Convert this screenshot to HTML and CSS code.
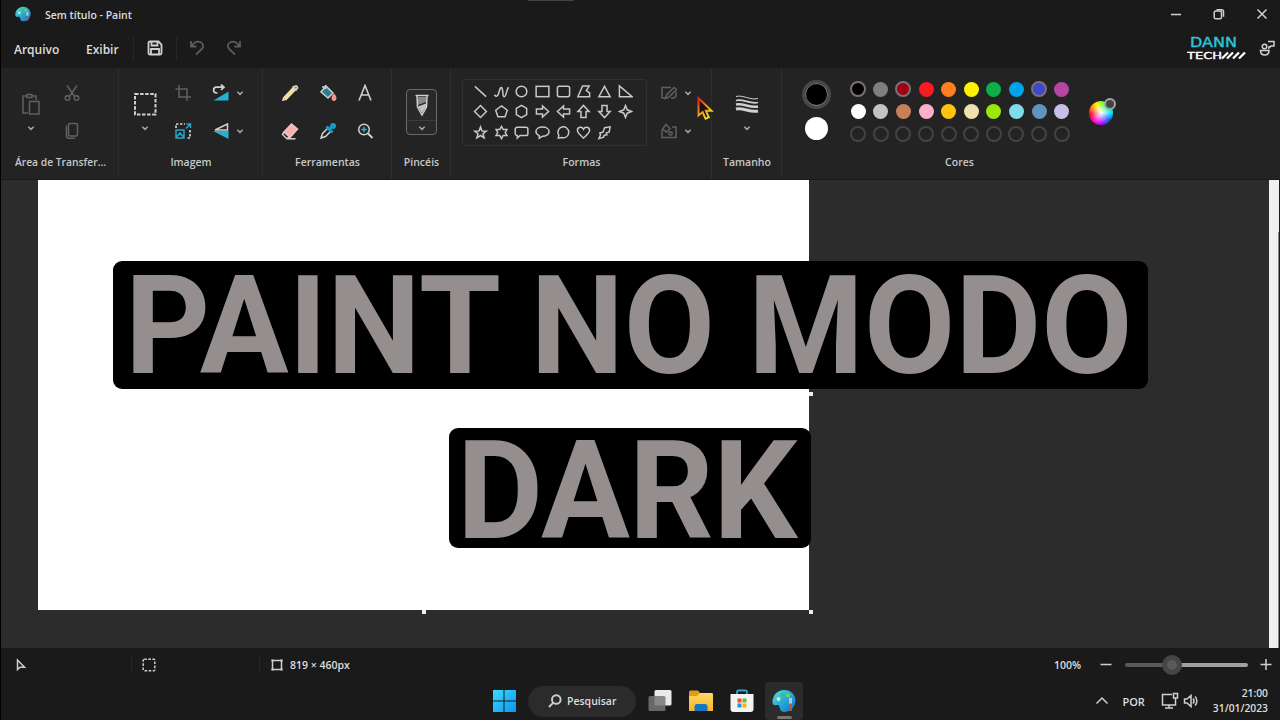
FILE: index.html
```html
<!DOCTYPE html>
<html lang="pt-BR">
<head>
    <meta charset="UTF-8">
    <meta name="viewport" content="width=device-width, initial-scale=1.0">
    <title>Sem título - Paint</title>
    <link rel="stylesheet" href="styles.css">
</head>
<body>
    <svg class="defs">
        <defs>
            <linearGradient id="blue" x1="0" y1="0" x2="1" y2="1">
                <stop offset="0" stop-color="#4fe0e0"/>
                <stop offset="1" stop-color="#0a6fd0"/>
            </linearGradient>
            <linearGradient id="win" x1="0" y1="0" x2="1" y2="1">
                <stop offset="0" stop-color="#3ddcff"/>
                <stop offset="1" stop-color="#0795f0"/>
            </linearGradient>
            <linearGradient id="folder" x1="0" y1="0" x2="0" y2="1">
                <stop offset="0" stop-color="#ffd968"/>
                <stop offset="1" stop-color="#f6b420"/>
            </linearGradient>
            <linearGradient id="pointer" x1="0" y1="0" x2="0.6" y2="1">
                <stop offset="0" stop-color="#e0201a"/>
                <stop offset="0.5" stop-color="#f08a20"/>
                <stop offset="1" stop-color="#e6e020"/>
            </linearGradient>
        </defs>
        <symbol id="chevron" viewBox="0 0 8 8"><path d="M1.3 2.8 4 5.4 6.7 2.8"/></symbol>
        <symbol id="palette" viewBox="0 0 24 24">
            <path d="M12 1C5.500 1 .5 6.500.5 13c0 2.500 1.500 3.600 3.200 3.200 2-.5 3.600-.4 3.800 1.600.2 2.400 1.500 5.200 4.500 5.200C19 23 23.500 17 23.500 11.500 23.500 5.500 18.500 1 12 1z" fill="url(#blue)"/>
            <circle cx="6.500" cy="10" r="1.900" fill="#d8f5b0"/>
            <circle cx="10.500" cy="5.800" r="1.900" fill="#37c466"/>
            <circle cx="16" cy="6.500" r="1.900" fill="#7ad943"/>
            <path d="M18.500 9v6" stroke="#b9c6d4" stroke-width="3"/>
            <path d="M18.500 14.500v7.500" stroke="#b25f34" stroke-width="2.600"/>
        </symbol>
    </svg>

    <div class="window">
        <div class="titlebar">
            <svg class="app-icon" viewBox="0 0 24 24"><use href="#palette"/></svg>
            <span class="title">Sem título - Paint</span>
            <div class="win-buttons">
                <svg viewBox="0 0 12 12"><path d="M1 6.500h10"/></svg>
                <svg viewBox="0 0 12 12"><rect x="1.200" y="3" width="7.300" height="7.800" rx="1.600"/><path d="M3.500 1.700h5c1.300 0 2 .7 2 2v5"/></svg>
                <svg viewBox="0 0 12 12"><path d="M1.500 1.500l9 9M10.500 1.500l-9 9"/></svg>
            </div>
        </div>
        <div class="top-tab"></div>

        <div class="menubar">
            <span class="menu-file">Arquivo</span>
            <span class="menu-view">Exibir</span>
            <i class="sep"></i>
            <svg class="ico save" viewBox="0 0 16 16"><path d="M3 1.500h8.500l3 3V13a1.500 1.500 0 0 1-1.500 1.500H3A1.500 1.500 0 0 1 1.500 13V3A1.500 1.500 0 0 1 3 1.500zM4.500 1.500v4h6v-4M4 14.500V9h8v5.500"/></svg>
            <i class="sep"></i>
            <svg class="ico undo" viewBox="0 0 16 16"><path d="M2 1v5.500h5.500M2.500 6C5 2.500 8.500.800 11.700 2.300c3 1.600 3 4.700 1 6.700L7 14.700"/></svg>
            <svg class="ico redo" viewBox="0 0 16 16"><path d="M14 1v5.500H8.500M13.500 6C11 2.500 7.500.800 4.300 2.300c-3 1.600-3 4.700-1 6.700L9 14.700"/></svg>
            <svg class="brand" viewBox="0 0 60 26">
                <text class="brand-top" x="3" y="11.500" textLength="47" lengthAdjust="spacingAndGlyphs">DANN</text>
                <text class="brand-bottom" x="0" y="24" textLength="35" lengthAdjust="spacingAndGlyphs">TECH</text>
                <path d="M35 23.500l6-6M40 23.500l6-6M46 23.500l6-6M52 23.500l6-6"/>
            </svg>
            <svg class="ico people" viewBox="0 0 16 16"><circle cx="5.500" cy="6.500" r="2.300"/><path d="M1.500 10.500h8.500c0 3-1.500 4.500-4.200 4.500s-4.300-1.500-4.300-4.500zM9 1.500h6v4.500h-3L10 8V6"/></svg>
        </div>

        <div class="ribbon">
            <div class="group clipboard">
                <div class="tools">
                    <div class="big dim">
                        <svg class="i24" viewBox="0 0 24 24"><path d="M8 4H4v17h5M17 8V4h-4M8 2.500h5v3H8zM10.500 9.500h9.500V22h-9.500z"/></svg>
                        <svg class="chev"><use href="#chevron"/></svg>
                    </div>
                    <svg class="i18 dim" viewBox="0 0 18 18"><path d="M4 1.500l7.500 11M14 1.500l-7.500 11"/><circle cx="4.500" cy="14" r="2.300"/><circle cx="13.500" cy="14" r="2.300"/></svg>
                    <svg class="i18 dim" viewBox="0 0 18 18"><rect x="5.500" y="1.500" width="9" height="12.500" rx="1.500"/><path d="M3.500 3.500v10.300c0 1.500 1 2.500 2.500 2.500h6"/></svg>
                </div>
                <div class="label first">Área de Transfer...</div>
            </div>

            <div class="group image">
                <div class="tools">
                    <div class="big">
                        <svg class="i24" viewBox="0 0 24 24"><rect class="dash" x="2" y="2" width="20.500" height="20.500"/></svg>
                        <svg class="chev"><use href="#chevron"/></svg>
                    </div>
                    <svg class="i18 dim" viewBox="0 0 18 18"><path d="M5 1v12h12M1.500 5H13v12"/></svg>
                    <div class="with-chev">
                        <svg class="i18" viewBox="0 0 18 18"><path stroke-width="1.700" d="M5.500 9H4.500a2.900 2.900 0 0 1 0-5.800h7M9 .500 12 3.200 9 6"/><path class="cyan" d="M1.500 16.500h15V7.500z"/></svg>
                        <svg class="chev"><use href="#chevron"/></svg>
                    </div>
                    <svg class="i18" viewBox="0 0 18 18"><path stroke-width="1.700" stroke-dasharray="2.500 1.500" d="M2 6V2h9M16 8v8h-4"/><path class="cyan-line" d="M2 8h8v8H2zM2.500 15l3.500-4 4 4.500M12 6.500l4-4M12.500 2h4v4"/></svg>
                    <div class="with-chev">
                        <svg class="i18" viewBox="0 0 18 18"><path d="M15.500 8V2L3 8z"/><path class="cyan" d="M1 9h15.500v8z"/></svg>
                        <svg class="chev"><use href="#chevron"/></svg>
                    </div>
                </div>
                <div class="label">Imagem</div>
            </div>

            <div class="group utils">
                <div class="tools">
                    <svg class="i18" viewBox="0 0 18 18"><path d="M3.500 15 13.500 4.500" stroke="#f3dea0" stroke-width="4.500"/><path d="M12 3l3 3 1.500-2c.5-1-1-2.500-2-2z" fill="#888"/><path d="M1 17.200l1-4 3 2.800z" fill="#ddd" stroke="none"/></svg>
                    <svg class="i18" viewBox="0 0 18 18"><path d="M7 2l7 7-5 5L2 8z" fill="#2a7d92"/><path d="M6.500 5V1M3 3h4"/><path d="M15 9.500c4 4 2.500 7.500 0 7.500s-4-3.500 0-7.500z" fill="#f4958c" stroke="none"/></svg>
                    <svg class="i18" viewBox="0 0 18 18"><path stroke-width="1.600" d="M2 16.500 8 1.500l6 15M4 11h8"/></svg>
                    <svg class="i18" viewBox="0 0 18 18"><path d="M3 10l7.500-8 6 5L9 15.500z" fill="#f7b0b0" stroke="#f7c4c4"/><path d="M3 10l-1.500 2.500 4 4L9 15.200M5.500 16.800h9"/></svg>
                    <svg class="i18" viewBox="0 0 18 18"><path d="M9.500 5.500 3.500 11.500 2 16l4.500-1.500 6-6"/><path d="M7.500 4.500l6 6M10.500 7l3.500-3.500" stroke="#179bc2" stroke-width="3"/><circle cx="14" cy="4" r="3" fill="#179bc2" stroke="none"/></svg>
                    <svg class="i18" viewBox="0 0 18 18"><circle cx="7" cy="7.500" r="5.300"/><path d="M11 11.500 15.500 16" stroke-width="2"/><path stroke="#27b4d4" d="M7 4.800v5.400M4.300 7.500h5.400"/></svg>
                </div>
                <div class="label">Ferramentas</div>
            </div>

            <div class="group brushes">
                <div class="tools">
                    <div class="brush-button">
                        <svg class="brush" viewBox="0 0 16 24"><path d="M1.500 1.500h13M3 2l.5 11L8 21l4.500-8L13 2"/><path d="M4 3h8v5l-8 3z" fill="#888" stroke="none"/><path d="M4 12.500l8-3v3.500L8 19z" fill="#c4c4c4" stroke="none"/></svg>
                        <svg class="chev"><use href="#chevron"/></svg>
                    </div>
                </div>
                <div class="label">Pincéis</div>
            </div>

            <div class="group shapes">
                <div class="tools">
                    <div class="shape-box">
                        <svg viewBox="0 0 16 16"><path d="M2 2.500l12 11"/></svg>
                        <svg viewBox="0 0 16 16"><path d="M.5 11.500C3 15 4.500 12 5.500 8S8 1.500 9 6s0 7.500 2 7.500S13 7 15.500 3.500"/></svg>
                        <svg viewBox="0 0 16 16"><circle cx="8" cy="8" r="5.700"/></svg>
                        <svg viewBox="0 0 16 16"><rect x="1.200" y="2.500" width="13.600" height="11"/></svg>
                        <svg viewBox="0 0 16 16"><rect x="1.500" y="2.500" width="13" height="11" rx="2"/></svg>
                        <svg viewBox="0 0 16 16"><path d="M7 2.200h7L11 7l3.500 2.500v4H2z"/></svg>
                        <svg viewBox="0 0 16 16"><path d="M8 2.500 14 13.500H2z"/></svg>
                        <svg viewBox="0 0 16 16"><path d="M1.500 2v11.500H15z"/></svg>

                        <svg viewBox="0 0 16 16"><path d="M8 1.700 14.300 8 8 14.300 1.700 8z"/></svg>
                        <svg viewBox="0 0 16 16"><path d="M8 2l6.200 4.600-2.400 7.100H4.200L1.800 6.600z"/></svg>
                        <svg viewBox="0 0 16 16"><path d="M8 1.500 13.500 4.700v6.600L8 14.500l-5.500-3.200V4.700z"/></svg>
                        <svg viewBox="0 0 16 16"><path d="M1.500 5.300H8V2l6.500 6L8 14v-3.300H1.500z"/></svg>
                        <svg viewBox="0 0 16 16"><path d="M14.500 5.300H8V2L1.500 8 8 14v-3.300h6.500z"/></svg>
                        <svg viewBox="0 0 16 16"><path d="M5.300 14.500V8H2l6-6.500L14 8h-3.300v6.500z"/></svg>
                        <svg viewBox="0 0 16 16"><path d="M5.300 1.500V8H2l6 6.500L14 8h-3.300V1.500z"/></svg>
                        <svg viewBox="0 0 16 16"><path d="M8 1.700 9.800 6.200 14.300 8 9.800 9.800 8 14.300 6.200 9.800 1.700 8l4.500-1.800z"/></svg>

                        <svg viewBox="0 0 16 16"><path d="M8 2l1.600 4.300 4.600.2-3.600 2.800 1.300 4.400L8 11.200l-3.900 2.500 1.300-4.400-3.600-2.800 4.600-.2z"/></svg>
                        <svg viewBox="0 0 16 16"><path d="M8 1.500l1.800 3.300h4L12 8l1.800 3.200h-4L8 14.500l-1.800-3.300h-4L4 8 2.200 4.800h4z"/></svg>
                        <svg viewBox="0 0 16 16"><path d="M3.500 2.500h9.300a2 2 0 0 1 2 2v4.700a2 2 0 0 1-2 2H6.500L3.500 14v-2.800a2 2 0 0 1-2.200-2V4.500a2 2 0 0 1 2.200-2z"/></svg>
                        <svg viewBox="0 0 16 16"><path d="M8 2.200c4 0 7 2 7 4.800s-3 5-7 5L4.500 14v-2.700C2.500 10.500 1 9 1 7c0-2.800 3-4.800 7-4.800z"/></svg>
                        <svg viewBox="0 0 16 16"><path d="M3 11A5.800 5.800 0 1 1 6 13.300L2.500 14z"/></svg>
                        <svg viewBox="0 0 16 16"><path d="M8 14C4 10.500 1.500 8.500 1.500 5.700 1.500 2 6.500 1.200 8 4.500 9.500 1.200 14.500 2 14.500 5.700 14.500 8.500 12 10.500 8 14z"/></svg>
                        <svg viewBox="0 0 16 16"><path d="M8 3l6-1-1 5.500-3 1 .5 2-3 .5-.5 2-5 1.500 1.800-4L3 8.500l3.500-1L7 6z"/></svg>
                    </div>
                    <div class="shape-options">
                        <div class="with-chev">
                            <svg class="i18 dim" viewBox="0 0 18 18"><path d="M11 3.500H2v10.500h3M16 8v3c0 2-1 3-3 3h-2M5.500 14.500l1-3.500L14 3.500l2.500 2L9 13z"/></svg>
                            <svg class="chev"><use href="#chevron"/></svg>
                        </div>
                        <div class="with-chev">
                            <svg class="i18 dim" viewBox="0 0 18 18"><path d="M2 8v7.500h14V5h-4M6 2.500l4 4-3.500 3.500L2.500 7z"/><circle cx="10.500" cy="11.500" r="1.700"/></svg>
                            <svg class="chev"><use href="#chevron"/></svg>
                        </div>
                    </div>
                </div>
                <div class="label">Formas</div>
            </div>

            <div class="group size">
                <div class="tools">
                    <div class="big">
                        <svg class="i24" viewBox="0 0 24 24"><path stroke-width="1" d="M1 4.500c7-2 14 4 22 2"/><path stroke-width="1.800" d="M1 8.500c7-2 14 4 22 2"/><path stroke-width="2.500" d="M1 12.500c7-2 14 4 22 2"/><path stroke-width="3" d="M1 17c7-2 14 4 22 2"/></svg>
                        <svg class="chev"><use href="#chevron"/></svg>
                    </div>
                </div>
                <div class="label">Tamanho</div>
            </div>

            <div class="group colors">
                <div class="tools">
                    <div class="current">
                        <span class="primary"></span>
                        <span class="secondary"></span>
                    </div>
                    <div class="swatches">
                        <b class="black ring"></b><b class="gray"></b><b class="darkred ring"></b><b class="red"></b><b class="orange"></b><b class="yellow"></b><b class="green"></b><b class="sky"></b><b class="indigo ring"></b><b class="purple"></b>
                        <b class="white"></b><b class="silver"></b><b class="brown"></b><b class="pink"></b><b class="gold"></b><b class="cream"></b><b class="lime"></b><b class="aqua"></b><b class="steel"></b><b class="lavender"></b>
                        <b class="empty"></b><b class="empty"></b><b class="empty"></b><b class="empty"></b><b class="empty"></b><b class="empty"></b><b class="empty"></b><b class="empty"></b><b class="empty"></b><b class="empty"></b>
                    </div>
                    <div class="wheel"><span class="wheel-add"></span></div>
                </div>
                <div class="label">Cores</div>
            </div>
        </div>

        <div class="workspace">
            <div class="canvas">
                <i class="handle bottom"></i>
                <i class="handle corner"></i>
                <i class="handle right"></i>
            </div>
            <div class="scrollbar"><div class="thumb"></div></div>
        </div>

        <div class="statusbar">
            <div class="cell pos">
                <svg class="ico14" viewBox="0 0 14 14"><path d="M3.500 2v9.500l2.500-2.300h4.500z"/></svg>
            </div>
            <div class="cell sel">
                <svg class="ico14" viewBox="0 0 14 14"><rect x="1.200" y="1.200" width="11.600" height="11.600" rx="1" stroke-dasharray="2.600 1.500"/></svg>
            </div>
            <div class="cell dims">
                <svg class="ico14" viewBox="0 0 14 14"><path d="M2.500 2.500h9v9h-9z"/><path stroke-width="2.200" d="M1.400 2.500h2.200M10.400 2.500h2.200M1.400 11.500h2.200M10.400 11.500h2.200"/></svg>
                <span class="dims-text">819 × 460px</span>
            </div>
            <div class="zoom">
                <span class="percent">100%</span>
                <svg class="ico14 minus" viewBox="0 0 14 14"><path d="M1.500 6.500h11"/></svg>
                <div class="slider"><span class="knob"></span></div>
                <svg class="ico14 plus" viewBox="0 0 14 14"><path d="M1.500 6.500h11M7 1v11"/></svg>
            </div>
        </div>
    </div>

    <div class="taskbar">
        <div class="apps">
            <svg class="app" viewBox="0 0 24 24"><path fill="url(#win)" d="M1 1h10.500v10.500H1zM12.500 1H24v10.500H12.500zM1 12.500h10.500V23H1zM12.500 12.500H24V23H12.500z"/></svg>
            <div class="search">
                <svg class="ico14" viewBox="0 0 14 14"><circle cx="8.300" cy="5.500" r="4.300"/><path d="M5.300 8.700 1 13"/></svg>
                <span>Pesquisar</span>
            </div>
            <svg class="app" viewBox="0 0 24 24"><rect x="6.500" y="1" width="17" height="15.500" rx="1.500" fill="#e9e9e9"/><rect x=".5" y="7" width="17" height="15" rx="1.500" fill="#777" opacity=".85"/></svg>
            <svg class="app" viewBox="0 0 24 24"><path d="M0 3.500C0 2 .5 1.500 2 1.500h7l2.500 3-3 3H0z" fill="#e39a17"/><path d="M0 7h8l3-3h11.500c1 0 1.500.5 1.500 1.500V22H0z" fill="url(#folder)"/><path d="M5.500 22v-4.500c0-1.500 1-2.500 2.500-2.500h8c1.500 0 2.500 1 2.500 2.500V22z" fill="#1477c4"/></svg>
            <svg class="app" viewBox="0 0 24 24"><path d="M7 6V3c0-1 .5-1.500 1.500-1.500h7c1 0 1.500.5 1.500 1.500v3" fill="none" stroke="#2aa7d8" stroke-width="1.800"/><path d="M.5 5h23v15c0 2-1 3-3 3h-17c-2 0-3-1-3-3z" fill="#f3f3f3"/><path fill="#e8502f" d="M7.500 9.500h4v4h-4z"/><path fill="#75b62f" d="M12.500 9.500h4v4h-4z"/><path fill="#1f98d8" d="M7.500 14.500h4v4h-4z"/><path fill="#f5b11d" d="M12.500 14.500h4v4h-4z"/></svg>
            <div class="app-active">
                <svg class="app" viewBox="0 0 24 24"><use href="#palette"/></svg>
            </div>
        </div>
        <div class="tray">
            <svg class="ico14" viewBox="0 0 14 14"><path d="M1.500 9.500 7 4l5.500 5.500"/></svg>
            <span class="lang">POR</span>
            <svg class="net" viewBox="0 0 18 18"><path d="M11 2.500H1.500v10.500h13V8M4 16h8M8 13v3M12.500 1.500h4v4.500h-4zM14.500 6v4"/></svg>
            <svg class="vol" viewBox="0 0 16 16"><path d="M1.500 6v4H4l4 3.500v-11L4 6zM10 5.500c1.300 1.500 1.300 3.500 0 5M12 3.500c2.500 2.500 2.500 6.500 0 9"/></svg>
            <div class="clock">21:00<br>31/01/2023</div>
        </div>
    </div>

    <div class="headline one"><span>PAINT NO MODO</span></div>
    <div class="headline two"><span>DARK</span></div>

    <svg class="mouse" viewBox="0 0 16 24"><path d="M2 2v16l3.800-3.200L8.500 21l3-1.300-2.700-6H14z"/></svg>
</body>
</html>
```

FILE: styles.css
```css
* {
    box-sizing: border-box;
}
body {
    margin: 0;
    width: 1280px;
    height: 720px;
    overflow: hidden;
    position: relative;
    background-color: #1a1a1a;
    color: #dedede;
    font-family: "Open Sans", "Noto Sans", sans-serif;
    font-size: 11px;
    font-weight: 600;
    border-left: 1px solid #000;
}
svg {
    display: block;
    flex: none;
    fill: none;
    stroke: #d0d0d0;
    stroke-width: 1.5;
}
.defs {
    position: absolute;
    width: 0;
    height: 0;
}
.window {
    height: 682px;
    display: flex;
    flex-direction: column;
}
.titlebar {
    height: 30px;
    display: flex;
    align-items: center;
    padding-left: 14px;
}
.app-icon {
    width: 16px;
    height: 16px;
    stroke: none;
    margin-right: 14px;
    margin-top: -2px;
}
.title {
    font-size: 10.5px;
}
.win-buttons {
    margin-left: auto;
    display: flex;
    gap: 31px;
    padding-right: 12px;
    margin-top: -3px;
}
.win-buttons svg {
    width: 12px;
    height: 12px;
}
.top-tab {
    position: absolute;
    top: 0;
    left: 527px;
    width: 46px;
    height: 1px;
    background-color: #444;
}

/* menu row */
.menubar {
    height: 38px;
    display: flex;
    align-items: center;
    padding-left: 13px;
    font-size: 12px;
}
.menu-file {
    width: 72px;
}
.menu-view {
    width: 47px;
}
.sep {
    width: 1px;
    height: 24px;
    background-color: #272727;
}
.ico {
    width: 16px;
    height: 16px;
    margin-top: -3px;
}
.save {
    margin: -3px 13px 0 13px;
    stroke-width: 1.8;
}
.undo {
    margin-left: 12px;
    stroke: #5c5c5c;
    stroke-width: 1.8;
}
.redo {
    margin-left: 21px;
    stroke: #5c5c5c;
    stroke-width: 1.8;
}
.brand {
    width: 60px;
    height: 26px;
    margin-left: auto;
    margin-right: 12px;
    margin-top: -3px;
    stroke: #fff;
    stroke-width: 2.2;
}
.brand text {
    font-family: "DejaVu Sans", sans-serif;
    font-weight: 400;
    stroke-width: 0.4;
}
.brand-top {
    fill: #2fc3dc;
    stroke: #2fc3dc;
    font-size: 14px;
}
.brand-bottom {
    fill: #fff;
    font-size: 9.5px;
}
.people {
    margin-right: 5px;
}

/* ribbon */
.ribbon {
    height: 112px;
    display: flex;
    background-color: #232323;
    border-bottom: 1px solid #1a1a1a;
}
.group {
    position: relative;
    padding-top: 6px;
    flex: none;
}
.group + .group {
    box-shadow: -1px 0 0 #2d2d2d;
}
.tools {
    height: 76px;
}
.label {
    height: 24px;
    line-height: 24px;
    text-align: center;
    font-size: 10.5px;
    color: #c8c8c8;
    white-space: nowrap;
}
.first {
    font-size: 10.3px;
    padding-left: 1px;
}
.i18 {
    width: 18px;
    height: 18px;
}
.i24 {
    width: 24px;
    height: 24px;
}
.chev {
    width: 8px;
    height: 8px;
    stroke: #a8a8a8;
}
.dim {
    stroke: #606060;
}
.dim .i24 {
    stroke: #606060;
}
.cyan {
    fill: #27b0cf;
    stroke: none;
}
.cyan-line {
    stroke: #27a4c4;
}
.big {
    grid-row: span 2;
    display: flex;
    flex-direction: column;
    align-items: center;
    gap: 8px;
    padding-top: 18px;
    align-self: start;
}
.dash {
    stroke-width: 2;
    stroke-dasharray: 3.5 1.6;
}
.with-chev {
    display: flex;
    align-items: center;
    gap: 6px;
}

.clipboard {
    width: 118px;
}
.clipboard .tools {
    display: grid;
    grid-template-columns: 40px 42px;
    grid-template-rows: 38px 38px;
    place-items: center;
    padding-left: 10px;
}
.image {
    width: 144px;
}
.image .tools {
    display: grid;
    grid-template-columns: 40px 36px 54px;
    grid-template-rows: 38px 38px;
    place-items: center;
    padding-left: 6px;
}
.utils {
    width: 129px;
}
.utils .tools {
    display: grid;
    grid-template-columns: repeat(3, 38px);
    grid-template-rows: 38px 38px;
    place-items: center;
    justify-content: center;
}
.brushes {
    width: 59px;
}
.brush-button {
    width: 31px;
    height: 46px;
    margin: 0 auto;
    border: 1px solid #6a6a6a;
    border-radius: 4px;
    display: flex;
    flex-direction: column;
    align-items: center;
    justify-content: space-between;
    padding: 4px 0 2px;
    background: linear-gradient(#292929 30px, #3c3c3c 30px, #3c3c3c 31px, #292929 31px);
}
.brushes .tools {
    padding-top: 15px;
}
.brush {
    width: 16px;
    height: 24px;
}
.shapes {
    width: 261px;
}
.shapes .tools {
    display: flex;
    padding-left: 11px;
}
.shape-box {
    width: 185px;
    height: 67px;
    margin-top: 5px;
    border: 1px solid #303030;
    border-radius: 3px;
    display: grid;
    grid-template-columns: repeat(8, 20.7px);
    grid-template-rows: repeat(3, 20.5px);
    place-items: center;
    padding: 1px 0 0 7px;
}
.shape-box svg {
    width: 15px;
    height: 15px;
    stroke-width: 1.6;
    stroke: #c8c8c8;
}
.shape-options {
    margin-left: 13px;
    display: grid;
    grid-template-rows: 38px 38px;
    align-items: center;
}
.size {
    width: 70px;
}
.colors {
    width: 355px;
}
.colors .tools {
    display: flex;
    padding-left: 20px;
}
.current {
    width: 28px;
    display: flex;
    flex-direction: column;
    align-items: center;
    gap: 8px;
    padding-top: 6px;
    margin-right: 17px;
}
.primary {
    width: 29px;
    height: 29px;
    border-radius: 50%;
    background-color: #000;
    border: 3px solid #484848;
    box-shadow: inset 0 0 0 1px #777;
}
.secondary {
    width: 23px;
    height: 23px;
    border-radius: 50%;
    background-color: #fff;
}
.swatches {
    display: grid;
    grid-template-columns: repeat(10, 22.6px);
    grid-template-rows: repeat(3, 22.6px);
    place-items: center;
    padding-top: 4px;
    align-content: start;
}
.swatches b {
    width: 15px;
    height: 15px;
    border-radius: 50%;
}
.swatches .ring {
    width: 16px;
    height: 16px;
    border: 2px solid #7c7074;
}
.swatches .empty {
    width: 16px;
    height: 16px;
    border: 2px solid #434343;
}
.black { background-color: #000; }
.gray { background-color: #7f7f7f; }
.darkred { background-color: #a00014; }
.red { background-color: #fa1a20; }
.orange { background-color: #ff7f20; }
.yellow { background-color: #fff200; }
.green { background-color: #0cb047; }
.sky { background-color: #00a2e8; }
.indigo { background-color: #3f48cc; }
.purple { background-color: #b348a4; }
.white { background-color: #fff; }
.silver { background-color: #c3c3c3; }
.brown { background-color: #c98058; }
.pink { background-color: #ffaec9; }
.gold { background-color: #ffc40e; }
.cream { background-color: #efe2ae; }
.lime { background-color: #9de60a; }
.aqua { background-color: #7fdcea; }
.steel { background-color: #6292c0; }
.lavender { background-color: #c8bfe7; }
.wheel {
    position: relative;
    width: 24px;
    height: 24px;
    margin: 27px 0 0 16px;
    border-radius: 50%;
    background: radial-gradient(circle, #fff 0, rgba(255, 255, 255, 0) 65%), conic-gradient(#8f0 0deg, #0f6 40deg, #0df 90deg, #05f 130deg, #a0f 175deg, #f0c 215deg, #f02 265deg, #f90 305deg, #fe0 335deg, #8f0 360deg);
}
.wheel-add {
    position: absolute;
    top: -3px;
    right: -3px;
    width: 12px;
    height: 12px;
    border-radius: 50%;
    background-color: #444;
    border: 2px solid #a5a5a5;
}

/* drawing area */
.workspace {
    height: 468px;
    background-color: #2c2c2c;
    display: flex;
    justify-content: space-between;
    padding-left: 37px;
}
.canvas {
    position: relative;
    width: 771px;
    height: 430px;
    background-color: #fff;
}
.handle {
    position: absolute;
    width: 4px;
    height: 4px;
    background-color: #eee;
}
.bottom {
    left: 384px;
    top: 430px;
}
.corner {
    left: 771px;
    top: 430px;
}
.right {
    left: 771px;
    top: 212px;
}
.scrollbar {
    width: 11px;
    background-color: #f0f0f0;
    border-right: 1px solid #1a1a1a;
}
.thumb {
    width: 1px;
    height: 416px;
    margin: 52px 0 0 9px;
    background-color: #858585;
}

/* status */
.statusbar {
    height: 34px;
    display: flex;
    align-items: center;
    font-size: 10.5px;
}
.ico14 {
    width: 14px;
    height: 14px;
}
.cell {
    display: flex;
    align-items: center;
    height: 16px;
}
.pos {
    width: 130px;
    padding-left: 13px;
}
.sel {
    width: 128px;
    padding-left: 10px;
    border-left: 1px solid #272727;
}
.dims {
    padding-left: 10px;
    gap: 6px;
    border-left: 1px solid #272727;
}
.zoom {
    margin-left: auto;
    display: flex;
    align-items: center;
    padding-right: 7px;
}
.percent {
    margin-right: 18px;
}
.slider {
    width: 123px;
    height: 4px;
    margin: 0 11px 0 12px;
    border-radius: 2px;
    background: linear-gradient(to right, #5a5a5a 46px, #a0a0a0 46px);
    position: relative;
}
.knob {
    position: absolute;
    left: 37px;
    top: -8px;
    width: 20px;
    height: 20px;
    border-radius: 50%;
    background-color: #5a5a5a;
    border: 5px solid #454545;
}

/* taskbar */
.taskbar {
    height: 38px;
    display: flex;
    justify-content: space-between;
}
.apps {
    display: flex;
    align-items: center;
    margin-left: 491px;
}
.app {
    width: 24px;
    height: 24px;
    stroke: none;
    margin-right: 17px;
}
.search {
    width: 108px;
    height: 31px;
    margin-left: -5px;
    margin-right: 12px;
    border-radius: 16px;
    background-color: #2b2b2b;
    display: flex;
    align-items: center;
    padding-left: 20px;
    gap: 5px;
    font-size: 10.5px;
}
.search .ico14 {
    stroke-width: 1.9;
}
.app-active {
    width: 38px;
    height: 38px;
    margin-left: -6px;
    background-color: #2b2b2b;
    border-radius: 4px;
    display: flex;
    justify-content: center;
    align-items: center;
    position: relative;
}
.app-active .app {
    margin: 0;
}
.app-active::after {
    content: "";
    position: absolute;
    bottom: 1px;
    left: 12px;
    width: 15px;
    height: 3px;
    border-radius: 2px;
    background-color: #777;
}
.tray {
    display: flex;
    align-items: center;
    padding-right: 12px;
}
.lang {
    margin: 0 16px 0 13px;
}
.net {
    width: 18px;
    height: 18px;
}
.vol {
    width: 16px;
    height: 16px;
    margin: 0 14px 0 4px;
}
.clock {
    text-align: right;
    line-height: 15px;
    font-size: 10.3px;
}

/* caption over everything */
.headline {
    position: absolute;
    background-color: #000;
    border-radius: 9px;
    color: #958e8e;
    font-family: Roboto, sans-serif;
    font-weight: 700;
    font-size: 136.5px;
    white-space: nowrap;
}
.headline span {
    display: inline-block;
    transform: scaleX(0.97);
    transform-origin: left;
}
.one {
    left: 112px;
    top: 261px;
    width: 1035px;
    height: 128px;
    line-height: 130px;
    padding-left: 12px;
}
.two {
    left: 448px;
    top: 428px;
    width: 362px;
    height: 120px;
    line-height: 126px;
    padding-left: 8px;
    letter-spacing: -0.8px;
}
.mouse {
    position: absolute;
    left: 695px;
    top: 96px;
    width: 18px;
    height: 26px;
    fill: #1c1010;
    stroke: url(#pointer);
    stroke-width: 1.8;
}
```
